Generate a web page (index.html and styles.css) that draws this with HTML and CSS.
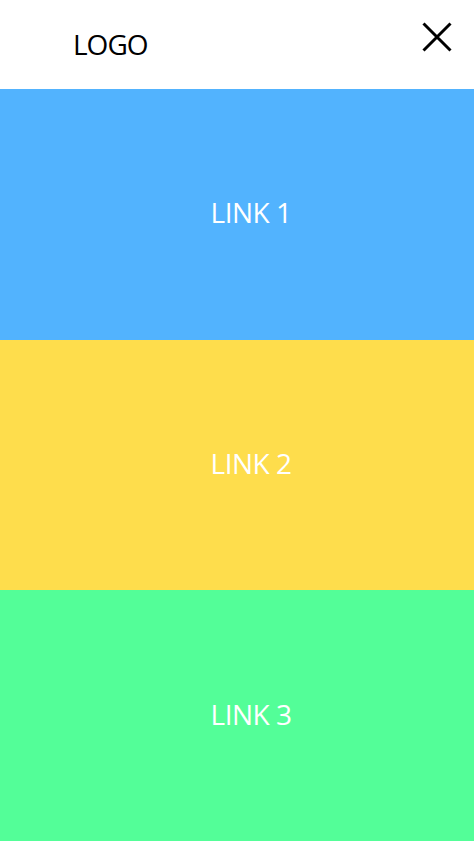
FILE: index.html
```html
<!DOCTYPE html>
<html>
<head>
<meta charset="utf-8">
<link rel="stylesheet" href="styles.css">
</head>
<body>
<div class="page">
  <header class="header">
    <span class="logo">LOGO</span>
    <button class="close" aria-label="Close">
      <svg width="30" height="30" viewBox="0 0 30 30"><path d="M1.5 1.5 L28.5 28.5 M28.5 1.5 L1.5 28.5" stroke="#000" stroke-width="3" fill="none"/></svg>
    </button>
  </header>
  <nav class="menu">
    <a class="link link-blue" href="#">LINK 1</a>
    <a class="link link-yellow" href="#">LINK 2</a>
    <a class="link link-green" href="#">LINK 3</a>
  </nav>
</div>
</body>
</html>
```
FILE: styles.css
```css
html, body { margin: 0; padding: 0; }
body { font-family: "Open Sans", "Liberation Sans", sans-serif; background: #fff; }
.page { display: flex; flex-direction: column; height: 841px; }
.header {
  height: 89px;
  display: flex;
  align-items: center;
  justify-content: space-between;
  padding: 0 22px 2px 73px;
  box-sizing: border-box;
}
.logo { font-size: 28px; color: #000; letter-spacing: -1px; }
.close { background: none; border: 0; padding: 0; margin-top: -14px; display: flex; }
.menu { flex: 1; display: flex; flex-direction: column; }
.link {
  flex: 1;
  display: flex;
  align-items: center;
  justify-content: center;
  padding: 0 0 4px 28px;
  box-sizing: border-box;
  color: #fff;
  font-size: 28px;
  text-decoration: none;
  letter-spacing: -0.5px;
}
.link-blue { background: #52b3fe; flex: 0 0 251px; padding-bottom: 6px; }
.link-yellow { background: #fedd4c; flex: 0 0 250px; }
.link-green { background: #53fe98; }
```
